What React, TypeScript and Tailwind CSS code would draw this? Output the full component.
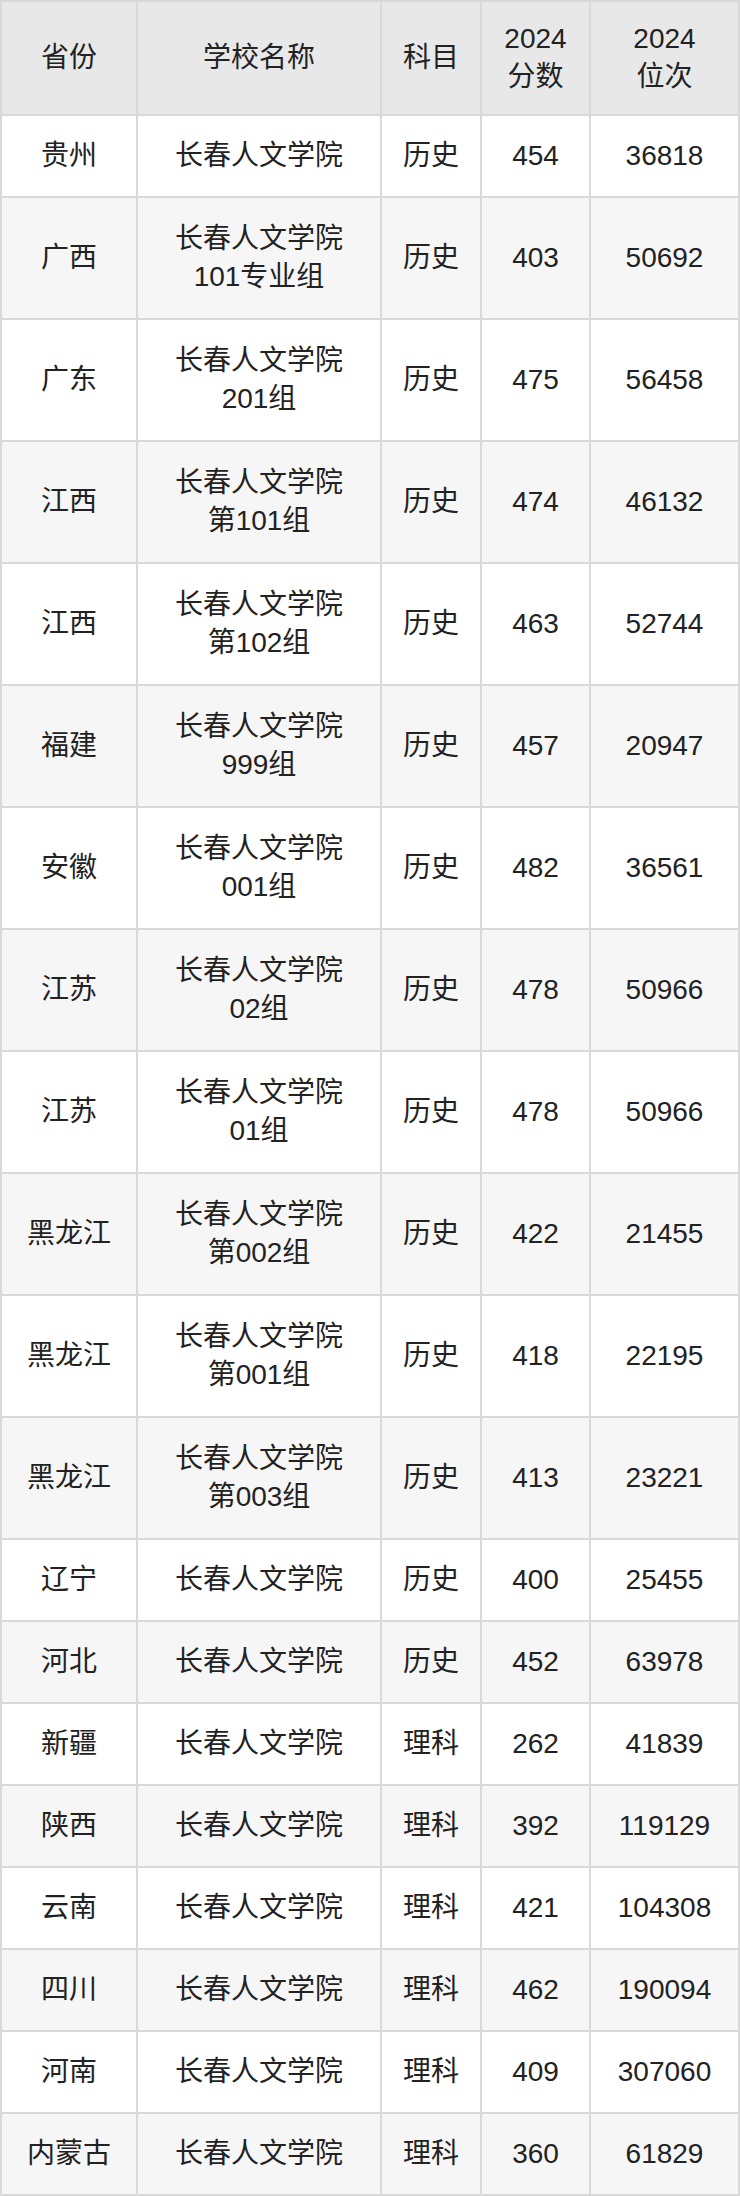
interface ScoreRow {
  province: string;
  school: string[];
  subject: string;
  score: string;
  rank: string;
}

const SCHOOL = "长春人文学院";

const ROWS: ScoreRow[] = [
  { province: "贵州", school: [SCHOOL], subject: "历史", score: "454", rank: "36818" },
  { province: "广西", school: [SCHOOL, "101专业组"], subject: "历史", score: "403", rank: "50692" },
  { province: "广东", school: [SCHOOL, "201组"], subject: "历史", score: "475", rank: "56458" },
  { province: "江西", school: [SCHOOL, "第101组"], subject: "历史", score: "474", rank: "46132" },
  { province: "江西", school: [SCHOOL, "第102组"], subject: "历史", score: "463", rank: "52744" },
  { province: "福建", school: [SCHOOL, "999组"], subject: "历史", score: "457", rank: "20947" },
  { province: "安徽", school: [SCHOOL, "001组"], subject: "历史", score: "482", rank: "36561" },
  { province: "江苏", school: [SCHOOL, "02组"], subject: "历史", score: "478", rank: "50966" },
  { province: "江苏", school: [SCHOOL, "01组"], subject: "历史", score: "478", rank: "50966" },
  { province: "黑龙江", school: [SCHOOL, "第002组"], subject: "历史", score: "422", rank: "21455" },
  { province: "黑龙江", school: [SCHOOL, "第001组"], subject: "历史", score: "418", rank: "22195" },
  { province: "黑龙江", school: [SCHOOL, "第003组"], subject: "历史", score: "413", rank: "23221" },
  { province: "辽宁", school: [SCHOOL], subject: "历史", score: "400", rank: "25455" },
  { province: "河北", school: [SCHOOL], subject: "历史", score: "452", rank: "63978" },
  { province: "新疆", school: [SCHOOL], subject: "理科", score: "262", rank: "41839" },
  { province: "陕西", school: [SCHOOL], subject: "理科", score: "392", rank: "119129" },
  { province: "云南", school: [SCHOOL], subject: "理科", score: "421", rank: "104308" },
  { province: "四川", school: [SCHOOL], subject: "理科", score: "462", rank: "190094" },
  { province: "河南", school: [SCHOOL], subject: "理科", score: "409", rank: "307060" },
  { province: "内蒙古", school: [SCHOOL], subject: "理科", score: "360", rank: "61829" },
];

function Cell({
  lines,
  height,
  bg,
}: {
  lines: string[];
  height: string;
  bg: string;
}) {
  return (
    <div className={`${height} ${bg} flex flex-col items-center justify-center text-center`}>
      {lines.map((l, i) => (
        <span key={i} className="block leading-[38px]">
          {l}
        </span>
      ))}
    </div>
  );
}

export default function App() {
  const head = [["省份"], ["学校名称"], ["科目"], ["2024", "分数"], ["2024", "位次"]];

  return (
    <div
      className="w-[740px] bg-white text-[28px] text-[#222]"
      style={{ fontFamily: '"Liberation Sans", "Noto Sans CJK SC", sans-serif' }}
    >
      <div className="grid grid-cols-[134px_242px_98px_107px_147px] gap-[2px] bg-[#d9d9d9] p-[2px]">
        {head.map((h, i) => (
          <Cell key={`h${i}`} lines={h} height="h-[112px]" bg="bg-[#e8e8e8]" />
        ))}
        {ROWS.map((r, idx) => {
          const height = r.school.length > 1 ? "h-[120px]" : "h-[80px]";
          const bg = idx % 2 === 0 ? "bg-white" : "bg-[#f6f6f6]";
          return [
            <Cell key={`${idx}-p`} lines={[r.province]} height={height} bg={bg} />,
            <Cell key={`${idx}-s`} lines={r.school} height={height} bg={bg} />,
            <Cell key={`${idx}-k`} lines={[r.subject]} height={height} bg={bg} />,
            <Cell key={`${idx}-f`} lines={[r.score]} height={height} bg={bg} />,
            <Cell key={`${idx}-r`} lines={[r.rank]} height={height} bg={bg} />,
          ];
        })}
      </div>
    </div>
  );
}
